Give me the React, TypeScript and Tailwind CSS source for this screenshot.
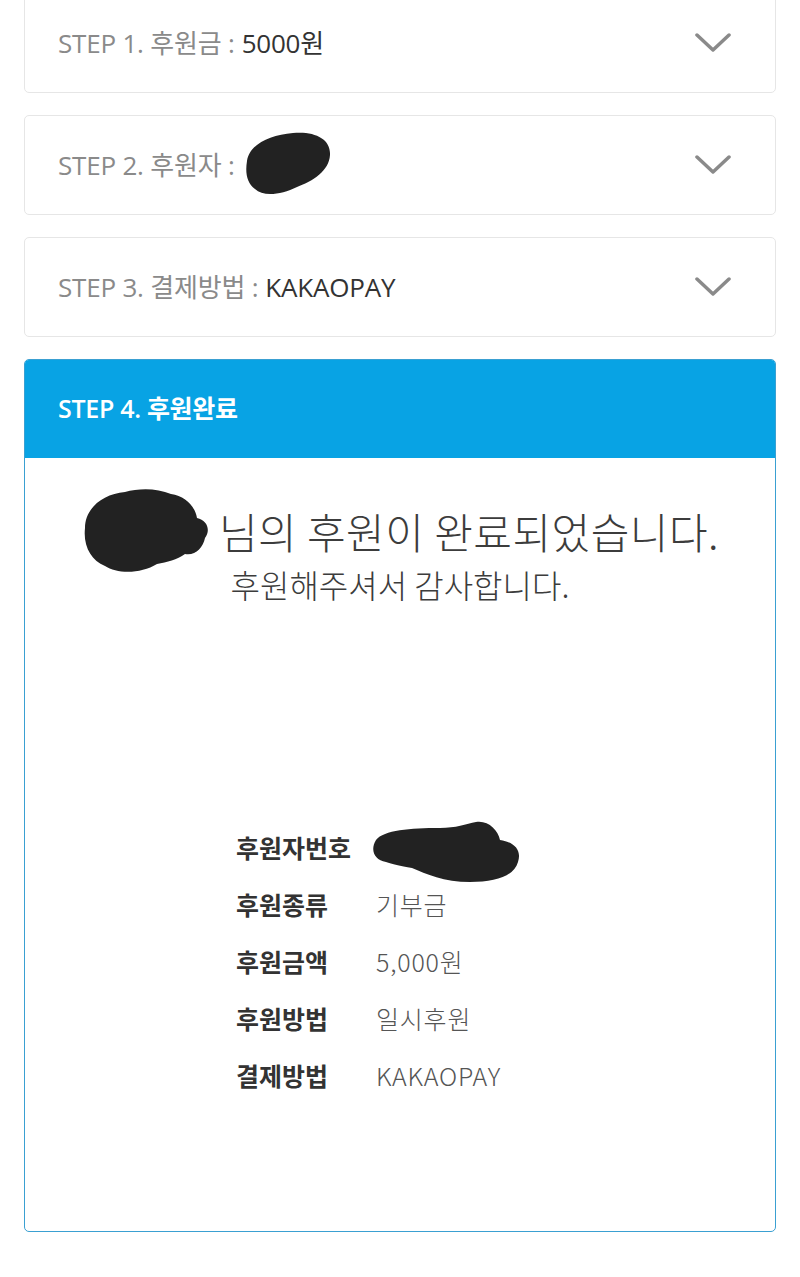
import React from "react";

const font = { fontFamily: '"Open Sans", "Noto Sans CJK KR", sans-serif' };
const kr = { fontFamily: '"Noto Sans CJK KR", sans-serif' };

function Chevron() {
  return (
    <svg width="36" height="22" viewBox="0 0 36 22" className="shrink-0">
      <path d="M2 3 L18 18 L34 3" fill="none" stroke="#8a8a8a" strokeWidth="3.5" strokeLinecap="round" strokeLinejoin="round" />
    </svg>
  );
}

function StepCard({ label, value, extra, className = "" }: { label: string; value?: string; extra?: React.ReactNode; className?: string }) {
  return (
    <div className={"flex h-[100px] items-center justify-between rounded-[5px] border border-[#e6e6e6] bg-white pl-[33px] pr-[44px] " + className}>
      <div className="flex items-center text-[26px] tracking-[-0.2px] text-[#8a8a8a]">
        <span>{label}</span>
        {value && <span className="ml-[7px] text-[#333333]">{value}</span>}
        {extra}
      </div>
      <Chevron />
    </div>
  );
}

function BlobStep2() {
  return (
    <svg width="92" height="68" viewBox="0 0 92 68" className="ml-[6px]">
      <path d="M6 30 C8 14 28 4 52 2 C74 0 90 8 89 24 C88 40 72 50 56 56 C40 64 22 66 14 58 C6 52 4 42 6 30 Z" fill="#222" />
    </svg>
  );
}

function BlobName() {
  return (
    <svg width="130" height="90" viewBox="0 0 130 90" className="mr-[8px] shrink-0">
      <path d="M4 42 C4 22 22 8 44 6 C58 2 76 2 90 8 C104 10 114 20 116 32 C126 34 130 44 124 52 C122 62 114 70 104 68 C96 74 86 76 76 78 C60 88 36 88 24 80 C10 74 2 60 4 42 Z" fill="#222" />
    </svg>
  );
}

function BlobNumber() {
  return (
    <svg width="152" height="66" viewBox="0 0 152 66">
      <path d="M6 20 C14 10 40 8 70 8 C86 8 96 4 106 2 C118 0 128 10 130 20 C144 22 152 30 148 42 C144 56 126 62 100 62 C74 62 56 54 42 48 C30 46 22 44 16 42 C4 40 0 30 6 20 Z" fill="#222" />
    </svg>
  );
}

const rows: [string, string][] = [
  ["후원종류", "기부금"],
  ["후원금액", "5,000원"],
  ["후원방법", "일시후원"],
  ["결제방법", "KAKAOPAY"],
];

export default function App() {
  return (
    <div className="min-h-[1277px] bg-white px-6 pb-[46px]" style={font}>
      <div className="flex flex-col gap-[22px]">
        <StepCard className="-mt-[7px]" label="STEP 1. 후원금 :" value="5000원" />
        <StepCard label="STEP 2. 후원자 :" extra={<BlobStep2 />} />
        <StepCard label="STEP 3. 결제방법 :" value="KAKAOPAY" />
        <div className="overflow-hidden rounded-[5px] border-[1.5px] border-[#3aa0d2] bg-white">
          <div className="flex h-[98px] items-center bg-[#08a3e4] pl-[33px] text-[25px] font-semibold tracking-[-0.3px] text-white">
            STEP 4. 후원완료
          </div>
          <div className="h-[773px] pt-[28px]">
            <div className="flex flex-col items-center">
              <div className="flex items-center">
                <BlobName />
                <span className="text-[42px] font-light leading-none tracking-[0.5px] text-[#3c3c3c]" style={kr}>
                  님의 후원이 완료되었습니다.
                </span>
              </div>
              <div className="-mt-[16px] text-[32px] font-light text-[#3c3c3c]" style={kr}>
                후원해주셔서 감사합니다.
              </div>
            </div>
            <div className="mt-[222px] flex flex-col gap-[21px] pl-[211px]" style={kr}>
              <div className="flex h-[36px] items-center">
                <span className="w-[134px] text-[25px] font-bold text-[#333]">후원자번호</span>
                <span className="mt-[10px]"><BlobNumber /></span>
              </div>
              {rows.map(([k, v]) => (
                <div key={k} className="flex h-[36px] items-center">
                  <span className="w-[140px] text-[25px] font-bold text-[#333]">{k}</span>
                  <span className="text-[25px] font-light tracking-[0.8px] text-[#555]">{v}</span>
                </div>
              ))}
            </div>
          </div>
        </div>
      </div>
    </div>
  );
}
